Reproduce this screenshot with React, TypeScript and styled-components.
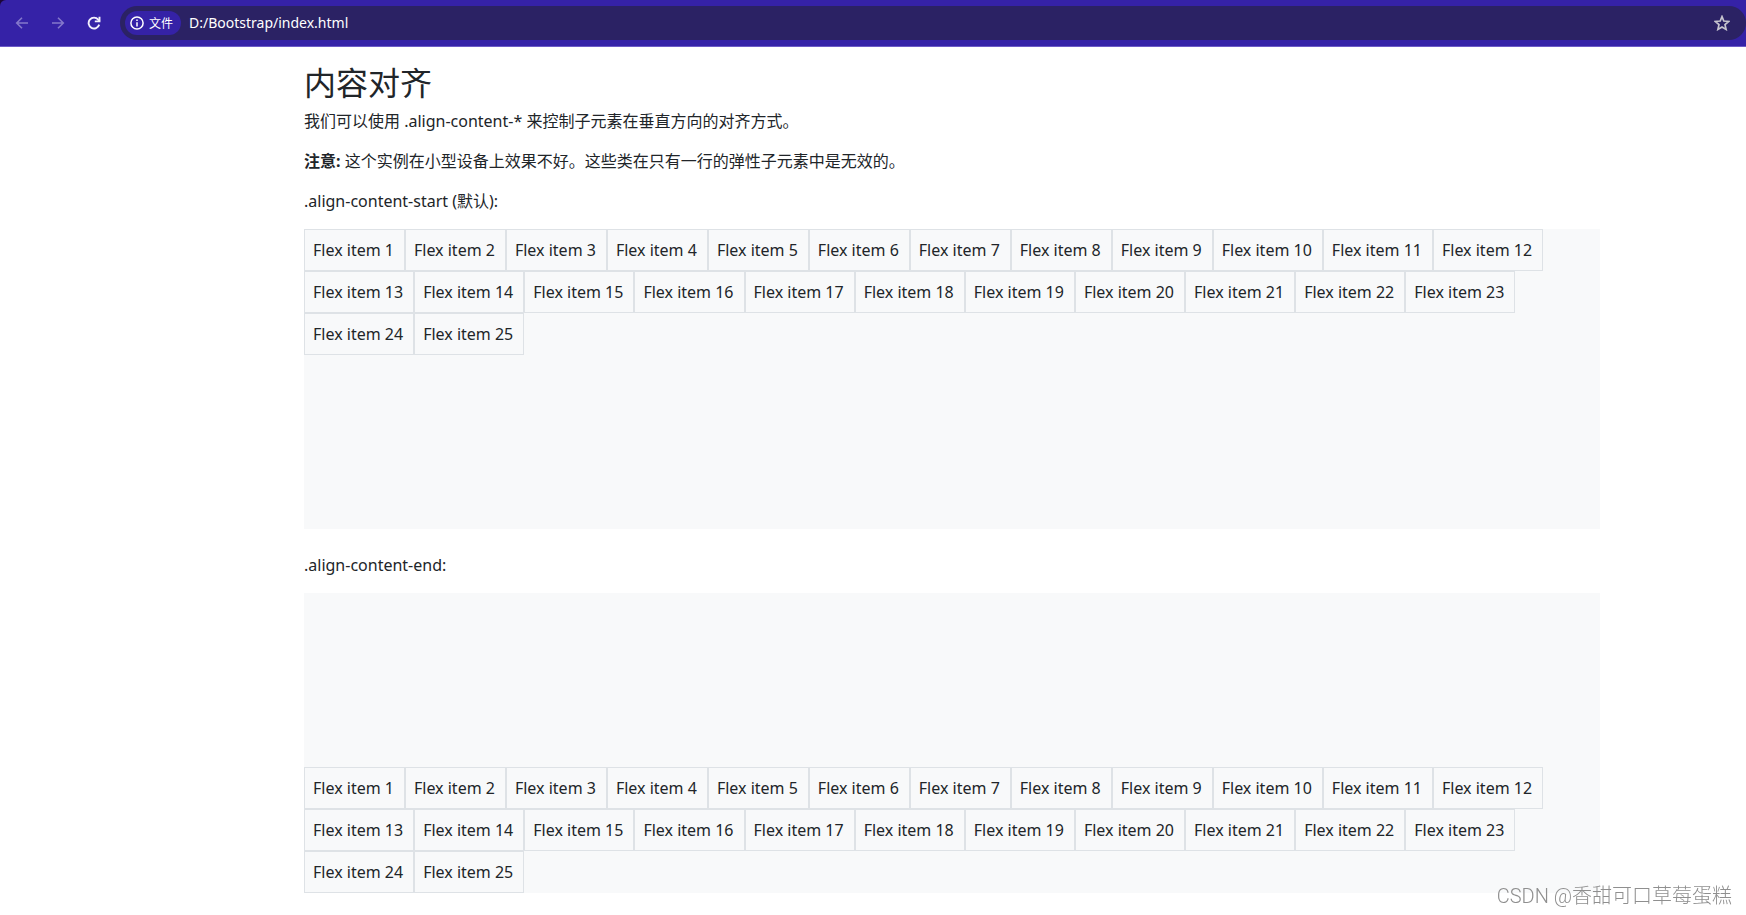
import React from "react";
import styled, { createGlobalStyle } from "styled-components";

const GlobalStyle = createGlobalStyle`
  *, *::before, *::after { box-sizing: border-box; }
  body {
    margin: 0;
    background: #fff;
    color: #212529;
    font-family: "Noto Sans", "Noto Sans CJK SC", sans-serif;
    font-size: 16px;
    line-height: 24px;
  }
`;

const Toolbar = styled.header`
  display: flex;
  align-items: center;
  height: 47px;
  padding-left: 4px;
  background: #3522a7;
  border-bottom: 1px solid #6c5ac6;
  border-top-left-radius: 6px;
`;

const Backdrop = styled.div`
  background: linear-gradient(#1c0638 0 20px, transparent 20px);
`;

const NavButton = styled.button<{ $dim?: boolean }>`
  display: flex;
  align-items: center;
  justify-content: center;
  width: 36px;
  height: 36px;
  padding: 0;
  border: 0;
  background: none;
  color: ${(p) => (p.$dim ? "#8478cb" : "#f2f0fc")};
`;

const AddressBar = styled.div`
  display: flex;
  flex: 1;
  align-items: center;
  gap: 8px;
  height: 34px;
  margin-left: 8px;
  padding: 0 5px;
  border-radius: 17px;
  background: #2b2264;
`;

const SchemeChip = styled.button`
  display: flex;
  align-items: center;
  gap: 5px;
  height: 24px;
  padding: 0 8px 0 5px;
  border: 0;
  border-radius: 12px;
  background: #3522a7;
  color: #fff;
  font: 12px/24px "Noto Sans CJK SC", sans-serif;
`;

const Address = styled.input`
  flex: 1;
  min-width: 0;
  height: 24px;
  padding: 0;
  border: 0;
  outline: 0;
  background: none;
  color: #fff;
  font: 14px/24px "Noto Sans", sans-serif;
`;

const StarButton = styled.button`
  display: flex;
  padding: 0;
  margin-right: 11px;
  border: 0;
  background: none;
  color: #c6c4ce;
`;

const Container = styled.main`
  max-width: 1612px;
  padding: 16px 12px 0 304px;
`;

const Title = styled.h2`
  margin: 0 0 6px;
  font-size: 32px;
  font-weight: 400;
  line-height: 40px;
`;

const Paragraph = styled.p`
  margin: 0 0 16px;
`;

const FlexBox = styled.div<{ $align: "flex-start" | "flex-end" }>`
  display: flex;
  flex-wrap: wrap;
  align-content: ${(p) => p.$align};
  height: 300px;
  margin-bottom: 24px;
  background: #f8f9fa;
`;

const FlexItem = styled.div`
  padding: 8px 10px 8px 8px;
  border: 1px solid #dee2e6;
  background: #f8f9fa;
  white-space: nowrap;
`;

const Watermark = styled.div`
  position: fixed;
  right: 14px;
  bottom: 5px;
  color: #8f8f8f;
  font: 300 20px/28px Roboto, "Noto Sans CJK SC", sans-serif;
`;

const items = Array.from({ length: 25 }, (_, i) => i + 1);

function ItemBox({ align }: { align: "flex-start" | "flex-end" }) {
  return (
    <FlexBox $align={align}>
      {items.map((n) => (
        <FlexItem key={n}>Flex item {n}</FlexItem>
      ))}
    </FlexBox>
  );
}

function Arrow({ forward }: { forward?: boolean }) {
  return (
    <svg width="14" height="14" viewBox="0 0 14 14" fill="none" stroke="currentColor" strokeWidth="1.6">
      <path d={forward ? "M1 7h11M7 1.7L12.3 7 7 12.3" : "M13 7H2M7 1.7L1.7 7 7 12.3"} />
    </svg>
  );
}

export default function App() {
  return (
    <>
      <GlobalStyle />
      <Backdrop>
        <Toolbar>
          <NavButton $dim aria-label="后退">
            <Arrow />
          </NavButton>
          <NavButton $dim aria-label="前进">
            <Arrow forward />
          </NavButton>
          <NavButton aria-label="重新加载">
            <svg width="14" height="14" viewBox="0 0 14 14" fill="none" stroke="currentColor" strokeWidth="1.9">
              <path d="M12.2 8.6A5.4 5.4 0 1 1 11.2 3.6L12.6 5.2" />
              <path d="M12.5 0.8V5.4H7.8" />
            </svg>
          </NavButton>
          <AddressBar>
            <SchemeChip>
              <svg width="14" height="14" viewBox="0 0 14 14" fill="none" stroke="currentColor" strokeWidth="1.5">
                <circle cx="7" cy="7" r="6.1" />
                <path d="M7 6.2v4.2M7 3.5v1.6" />
              </svg>
              文件
            </SchemeChip>
            <Address aria-label="地址" defaultValue="D:/Bootstrap/index.html" />
            <StarButton aria-label="收藏">
              <svg width="16" height="16" viewBox="0 0 16 16" fill="none" stroke="currentColor" strokeWidth="1.7">
                <path d="M8 1.6l1.8 4.4 5 .4-3.8 3.2 1.1 4.8L8 11.9l-4.1 2.5L5 9.6 1.200 6.400l5-.4z" />
              </svg>
            </StarButton>
          </AddressBar>
        </Toolbar>
      </Backdrop>
      <Container>
        <Title>内容对齐</Title>
        <Paragraph>我们可以使用 .align-content-* 来控制子元素在垂直方向的对齐方式。</Paragraph>
        <Paragraph>
          <b>注意:</b> 这个实例在小型设备上效果不好。这些类在只有一行的弹性子元素中是无效的。
        </Paragraph>
        <Paragraph>.align-content-start (默认):</Paragraph>
        <ItemBox align="flex-start" />
        <Paragraph>.align-content-end:</Paragraph>
        <ItemBox align="flex-end" />
      </Container>
      <Watermark>CSDN @香甜可口草莓蛋糕</Watermark>
    </>
  );
}
